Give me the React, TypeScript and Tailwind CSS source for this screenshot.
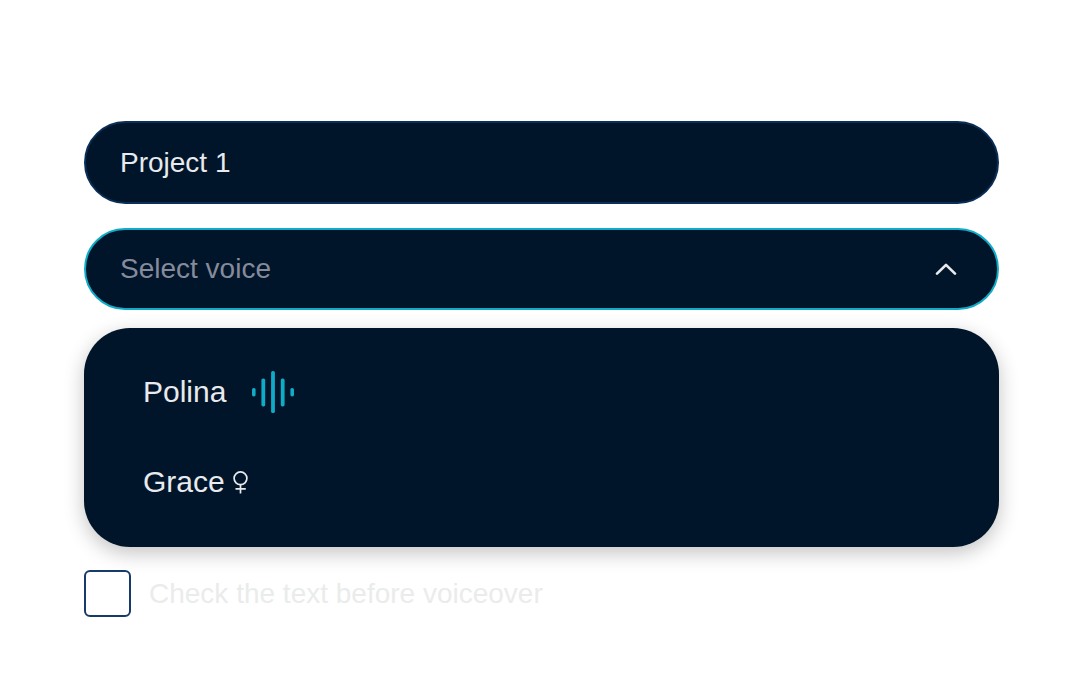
import { useState } from "react";

const voices = [
  { name: "Polina", playing: true },
  { name: "Grace", playing: false },
];

function WaveIcon() {
  return (
    <svg
      className="h-[42px] w-[42px] text-[#10abc9]"
      viewBox="0 0 42 42"
      fill="currentColor"
      aria-hidden="true"
    >
      <rect x="0" y="17" width="3.6" height="8.4" rx="1.6" />
      <rect x="9.4" y="7.4" width="3.8" height="28" rx="1.6" />
      <rect x="19.1" y="0" width="3.8" height="42" rx="1.6" />
      <rect x="28.8" y="7.4" width="3.8" height="28" rx="1.6" />
      <rect x="38.4" y="17" width="3.6" height="8.4" rx="1.6" />
    </svg>
  );
}

function FemaleIcon() {
  return (
    <svg
      className="h-6 w-4"
      viewBox="0 0 16 24"
      fill="none"
      stroke="currentColor"
      strokeWidth="1.7"
      aria-hidden="true"
    >
      <circle cx="7.5" cy="8.3" r="6.4" />
      <path d="M7.5 14.7V23.5M2.5 18.8H12.8" />
    </svg>
  );
}

function ChevronUp() {
  return (
    <svg
      className="pointer-events-none absolute top-1/2 right-[41px] h-4 w-6 -translate-y-1/2"
      viewBox="0 0 24 16"
      fill="none"
      stroke="#e8eaed"
      strokeWidth="2.7"
      strokeLinecap="round"
      strokeLinejoin="round"
      aria-hidden="true"
    >
      <path d="M3 12.6L12 3.9L21 12.6" />
    </svg>
  );
}

export default function App() {
  const [project, setProject] = useState("Project 1");
  const [voice, setVoice] = useState("");
  const [checkText, setCheckText] = useState(false);

  return (
    <main className="min-h-screen bg-white pt-[121px] pr-[81px] pb-10 pl-[84px] font-['Liberation_Sans',sans-serif] text-[28px] leading-9">
      <form className="flex flex-col">
        <input
          type="text"
          aria-label="Project name"
          value={project}
          onChange={(e) => setProject(e.target.value)}
          className="h-[83px] w-full rounded-full border-2 border-[#092f59] bg-[#001529] px-[34px] text-[#e8eaed] outline-none"
        />

        <div className="relative mt-6 text-[#868b9c]">
          <select
            aria-label="Voice"
            value={voice}
            onChange={(e) => setVoice(e.target.value)}
            className="block h-[82px] w-full appearance-none rounded-full border-2 border-[#10abc9] bg-[#001529] px-[34px] outline-none"
          >
            <option value="">Select voice</option>
            {voices.map((item) => (
              <option key={item.name} value={item.name}>
                {item.name}
              </option>
            ))}
          </select>
          <ChevronUp />
        </div>

        <ul className="mt-[18px] flex flex-col gap-3 rounded-[46px] bg-[#001529] px-[59px] pt-[25px] pb-[26px] text-[30px] text-[#e8eaed] shadow-[0_6px_20px_rgba(0,0,0,0.24)]">
          {voices.map((item) => (
            <li key={item.name}>
              <button
                type="button"
                onClick={() => setVoice(item.name)}
                className="flex h-[78px] w-full items-center text-left"
              >
                <span className={item.playing ? "mr-[26px]" : "mr-2"}>{item.name}</span>
                {item.playing ? <WaveIcon /> : <FemaleIcon />}
              </button>
            </li>
          ))}
        </ul>

        <label className="mt-[23px] flex items-center gap-[18px] self-start text-[#eaecec]">
          <input
            type="checkbox"
            checked={checkText}
            onChange={(e) => setCheckText(e.target.checked)}
            className="size-[47px] appearance-none rounded-md border-2 border-[#173b68] bg-white checked:bg-[#10abc9]"
          />
          <span>Check the text before voiceover</span>
        </label>
      </form>
    </main>
  );
}
